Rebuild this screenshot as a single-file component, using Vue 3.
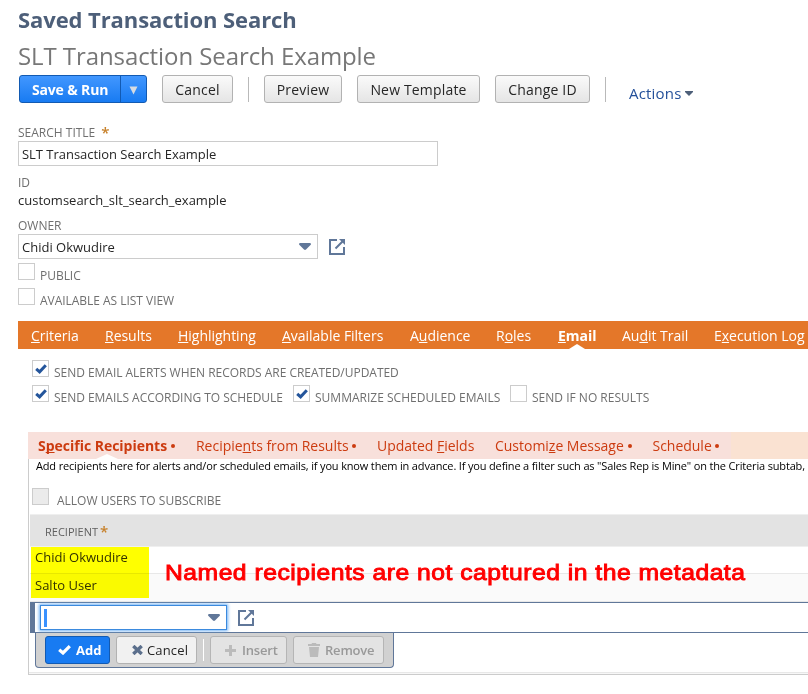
<script setup>
const toolbar = [
  { label: 'Cancel', cls: 'b-cancel' },
  { sep: true },
  { label: 'Preview', cls: 'b-preview' },
  { label: 'New Template', cls: 'b-template' },
  { label: 'Change ID', cls: 'b-change' },
  { sep: true },
]

// Each tab label is split around its underlined access key.
const tabs = [
  { a: '', k: 'C', b: 'riteria', w: 48 },
  { a: '', k: 'R', b: 'esults', w: 47 },
  { a: '', k: 'H', b: 'ighlighting', w: 78 },
  { a: '', k: 'A', b: 'vailable Filters', w: 102 },
  { a: 'A', k: 'u', b: 'dience', w: 60 },
  { a: 'R', k: 'o', b: 'les', w: 36 },
  { a: '', k: 'E', b: 'mail', w: 38, active: true },
  { a: 'Au', k: 'd', b: 'it Trail', w: 66 },
  { a: 'E', k: 'x', b: 'ecution Log', w: 91 },
]

const subtabs = [
  { a: 'S', k: 'p', b: 'ecific Recipients', w: 137, dot: true, active: true },
  { a: 'Recipie', k: 'n', b: 'ts from Results', w: 160, dot: true },
  { a: 'Updated ', k: 'F', b: 'ields', w: 97 },
  { a: 'Customi', k: 'z', b: 'e Message', w: 136.5, dot: true },
  { a: 'Schedule', k: '', b: '', w: 66.5, dot: true },
]

const schedule = [
  { label: 'SEND EMAILS ACCORDING TO SCHEDULE', on: true, w: 239 },
  { label: 'SUMMARIZE SCHEDULED EMAILS', on: true, w: 195 },
  { label: 'SEND IF NO RESULTS', on: false, w: 130 },
]

const recipients = ['Chidi Okwudire', 'Salto User']
</script>

<template>
  <main class="page">
    <h1>Saved Transaction Search</h1>
    <h2>SLT Transaction Search Example</h2>

    <div class="toolbar">
      <div class="split">
        <button class="run">Save &amp; Run</button>
        <button class="more">
          <svg width="9" height="9" viewBox="0 0 9 9"><path d="M0.5 0.5H8.5L4.5 8.5Z" fill="#d6dbe2" /></svg>
        </button>
      </div>
      <template v-for="(t, i) in toolbar" :key="i">
        <i v-if="t.sep" class="sep"></i>
        <button v-else class="btn" :class="t.cls">{{ t.label }}</button>
      </template>
      <a class="actions">Actions<svg width="8" height="5" viewBox="0 0 8 5"><path d="M0 0H8V1L4 5L0 1Z" fill="#4d5f79" /></svg></a>
    </div>

    <section class="fields">
      <label class="lab first"><span class="t-title">SEARCH TITLE</span><b class="star">*</b></label>
      <div class="input title-input">SLT Transaction Search Example</div>
      <label class="lab id">ID</label>
      <div class="value">customsearch_slt_search_example</div>
      <label class="lab owner">OWNER</label>
      <div class="line">
        <div class="input select">
          <span>Chidi Okwudire</span>
          <svg width="12" height="7" viewBox="0 0 12 7"><path d="M0.5 0H11.5L12 1.6L7 6.6Q6 7.4 5 6.6L0 1.6Z" fill="#607799" /></svg>
        </div>
        <svg class="pop" width="16" height="16" viewBox="0 0 16 16" fill="none" stroke="#607799" stroke-width="2"><path d="M8 1H1V15H15V8M6.5 9.5L13.5 2.5" /><path d="M10 0H16V6Z" fill="#607799" stroke="none" /></svg>
      </div>
      <div class="check c1"><i class="box"></i><span>PUBLIC</span></div>
      <div class="check c2"><i class="box"></i><span class="t-list">AVAILABLE AS LIST VIEW</span></div>
    </section>

    <nav class="tabs">
      <a v-for="t in tabs" :key="t.b" :class="{ active: t.active }" :style="{ width: t.w + 'px' }">{{ t.a }}<u>{{ t.k }}</u>{{ t.b }}</a>
    </nav>

    <section class="mail">
      <div class="check">
        <i class="box"><svg width="12" height="10" viewBox="0 0 12 10" fill="none" stroke="#24559b" stroke-width="3"><path d="M1.2 4.8L4.6 7.8L10.8 1.2" /></svg></i>
        <span class="t-alerts">SEND EMAIL ALERTS WHEN RECORDS ARE CREATED/UPDATED</span>
      </div>
      <div class="row2">
        <div v-for="s in schedule" :key="s.label" class="check" :style="{ width: s.w + 22 + 'px' }">
          <i class="box"><svg v-if="s.on" width="12" height="10" viewBox="0 0 12 10" fill="none" stroke="#24559b" stroke-width="3"><path d="M1.2 4.8L4.6 7.8L10.8 1.2" /></svg></i>
          <span>{{ s.label }}</span>
        </div>
      </div>
    </section>

    <nav class="subtabs">
      <div class="inner">
        <a v-for="t in subtabs" :key="t.a" :class="{ active: t.active }" :style="{ width: t.w + 'px' }"><span>{{ t.a }}<u>{{ t.k }}</u>{{ t.b }}</span><i v-if="t.dot" class="dot"></i></a>
      </div>
    </nav>

    <section class="panel">
      <p class="help">Add recipients here for alerts and/or scheduled emails, if you know them in advance. If you define a filter such as "Sales Rep is Mine" on the Criteria subtab,</p>
      <div class="check allow"><i class="box off"></i><span>ALLOW USERS TO SUBSCRIBE</span></div>
      <div class="thead"><span>RECIPIENT</span><b class="star">*</b></div>
      <div class="rows">
        <div v-for="r in recipients" :key="r" class="rec">{{ r }}</div>
        <div class="marker"></div>
        <div class="note">Named recipients are not captured in the metadata</div>
      </div>
      <div class="edit">
        <div class="focus">
          <i class="cursor"></i>
          <svg width="12" height="7" viewBox="0 0 12 7"><path d="M0.5 0H11.5L12 1.6L7 6.6Q6 7.4 5 6.6L0 1.6Z" fill="#607799" /></svg>
        </div>
        <svg class="pop2" width="16" height="16" viewBox="0 0 16 16" fill="none" stroke="#607799" stroke-width="2"><path d="M8 1H1V15H15V8M6.5 9.5L13.5 2.5" /><path d="M10 0H16V6Z" fill="#607799" stroke="none" /></svg>
      </div>
      <div class="machine">
        <button class="btn add"><svg width="13" height="10" viewBox="0 0 13 10" fill="none" stroke="#fff" stroke-width="3.2"><path d="M1.2 4.8L5 8L11.8 1.2" /></svg><span>Add</span></button>
        <button class="btn mcancel"><svg width="11" height="10" viewBox="0 0 11 10" fill="none" stroke="#5b6f8c" stroke-width="3.4"><path d="M1.3 1L9.7 9M9.7 1L1.3 9" /></svg><span>Cancel</span></button>
        <i class="wsep"></i>
        <button class="btn ins"><svg width="11" height="11" viewBox="0 0 11 11" fill="none" stroke="#bbb" stroke-width="3"><path d="M5.5 0V11M0 5.5H11" /></svg><span>Insert</span></button>
        <button class="btn rem"><svg width="12" height="14" viewBox="0 0 12 14" fill="#bbb"><path d="M0 1H3.5L4 0H8L8.5 1H12V3H0ZM1 4H11L10 14H2Z" /></svg><span>Remove</span></button>
      </div>
      <div class="foot"></div>
    </section>
  </main>
</template>

<style>
body { background: #fff; overflow: hidden; }
</style>

<style scoped>
* { box-sizing: border-box; }
.page {
  width: 808px;
  height: 694px;
  overflow: hidden;
  font-family: "Open Sans", "Noto Sans", sans-serif;
  color: #262626;
  white-space: nowrap;
  display: flex;
  flex-direction: column;
}
h1, h2, p { margin: 0; }
h1 { padding-left: 18px; font-size: 22px; line-height: 38px; height: 38px; font-weight: 700; color: #4d5f79; letter-spacing: -0.09px; }
h2 { padding-left: 18px; font-size: 24px; line-height: 36px; height: 34px; font-weight: 400; color: #777; letter-spacing: -0.08px; }
button { font-family: inherit; padding: 0; margin: 0; }
svg { display: block; flex: none; }
i, b { font-style: normal; flex: none; }

.toolbar { display: flex; align-items: flex-start; margin: 3px 0 0 19px; height: 28px; }
.split { display: flex; width: 128px; height: 28px; border: 1px solid #125ab2; border-radius: 3px; background: linear-gradient(#4297ff, #187bf2); margin-right: 15px; }
.split button { border: 0; background: none; height: 26px; }
.run { width: 101px; font-size: 14px; font-weight: 700; color: #fff; line-height: 28px; letter-spacing: -0.15px; }
.split .more { width: 26px; border-left: 1px solid #125ab2; display: flex; align-items: center; justify-content: center; padding-top: 2px; }
.btn { height: 28px; border: 1px solid #b2b2b2; border-radius: 3px; background: linear-gradient(#fafafa, #e5e5e5); font-size: 14px; font-weight: 500; color: #262626; line-height: 28px; letter-spacing: 0.17px; }
.b-cancel { width: 71px; margin-right: 15px; }
.sep { width: 1px; height: 25px; margin: 2px 15px 0 0; background: #b9b9b9; }
.b-preview { width: 78px; margin-right: 15px; }
.b-template { width: 123px; margin-right: 15px; }
.b-change { width: 95px; margin-right: 15px; }
.actions { display: flex; align-items: center; gap: 3px; margin-left: 8px; margin-top: 8px; height: 20px; line-height: 20px; font-size: 15px; font-weight: 500; letter-spacing: 0.2px; color: #24509a; }

.fields { margin-left: 18px; display: flex; flex-direction: column; }
.lab { display: flex; height: 16px; line-height: 18px; font-size: 12px; color: #6f6f6f; }
.first { margin-top: 21px; }
.star { color: #c7812b; font-size: 15px; line-height: 17px; font-weight: 600; margin-left: 6px; }
.input { height: 25px; border: 1px solid #ccc; background: #fff; line-height: 24px; font-size: 13px; padding-left: 3px; margin-top: 1px; }
.title-input { width: 420px; letter-spacing: -0.03px; }
.id { margin-top: 8px; }
.value { font-size: 13px; line-height: 20px; height: 20px; }
.owner { margin-top: 7px; }
.line { display: flex; }
.select { width: 300px; display: flex; justify-content: space-between; padding-right: 6px; }
.select svg { margin-top: 8px; }
.pop { margin: 6px 0 0 11px; }
.check { display: flex; height: 17px; font-size: 12px; color: #6f6f6f; }
.check span { margin-left: 5px; line-height: 16px; padding-top: 5px; height: 21px; letter-spacing: -0.03px; }
.row2 .check + .check span { letter-spacing: 0.01px; }
.box { width: 17px; height: 17px; border: 1px solid #ccc; background: #fff; display: flex; align-items: center; justify-content: center; }
.off { background: #ebebeb; }
.c1 { margin-top: 4px; }
.c2 { margin-top: 8px; }

.tabs { display: flex; gap: 26px; margin: 16px 0 0 18px; padding-left: 13px; height: 28px; background: #e47729; color: #fff; font-size: 14px; line-height: 29px; overflow: hidden; }
.tabs a { flex: none; position: relative; letter-spacing: -0.02px; }
u { text-underline-offset: 1px; text-decoration-thickness: 1px; text-decoration-skip-ink: none; }
.active { font-weight: 700; }
.tabs .active::after { content: ""; position: absolute; left: 11px; bottom: 0; border: 8px solid transparent; border-top: 0; border-bottom: 5px solid #fff; }

.mail { margin: 11px 0 0 32px; display: flex; flex-direction: column; gap: 8px; }
.row2 { display: flex; }

.subtabs { margin: 30px 0 0 28px; height: 27px; background: #fae2d2; }
.inner { width: 703px; height: 27px; background: #f8e0db; display: flex; gap: 21px; padding-left: 10px; font-size: 14px; line-height: 27px; color: #cc3b10; letter-spacing: -0.02px; }
.subtabs a { flex: none; display: flex; position: relative; justify-content: space-between; align-items: center; }
.subtabs .active::after { content: ""; position: absolute; left: 58px; bottom: 0; border: 11px solid transparent; border-top: 0; border-bottom: 5px solid #fff; }
.dot { width: 4px; height: 4px; border-radius: 50%; background: #cc3b10; margin-top: 1px; }

.panel { margin-left: 28px; border-left: 1px solid #ccc; height: 216px; display: flex; flex-direction: column; }
.help { font-size: 11px; line-height: 14px; height: 15px; padding-left: 7px; color: #000; letter-spacing: -0.16px; }
.allow { margin: 14px 0 0 3px; }
.allow span { margin-left: 8px; letter-spacing: 0; }
.thead { margin: 9px 0 0 1px; height: 33px; border-top: 1px solid #efefef; border-bottom: 1px solid #efefef; background: #e3e3e3; padding-left: 15px; display: flex; font-size: 11px; line-height: 34px; color: #5f5f5f; }
.thead .star { margin-left: 2px; line-height: 32px; }
.rows { position: relative; margin-left: 1px; height: 55px; }
.rec { height: 27px; border-bottom: 1px solid #e8e8e8; font-size: 13px; line-height: 21px; padding-left: 5px; color: #333; }
.rec + .rec { height: 28px; background: #fafafa; line-height: 23px; }
.marker { position: absolute; left: 1px; top: 0; width: 118px; height: 51px; background: #ff0; mix-blend-mode: multiply; }
.note { position: absolute; left: 135px; top: 9px; font: 400 22px/33px "Liberation Sans", Arial, sans-serif; letter-spacing: 0.45px; -webkit-text-stroke: 0.9px #f00; transform: scaleX(1.122); transform-origin: 0 0; color: #f00; }
.edit { margin-left: 1px; height: 31px; border: 1px solid #607799; border-left-width: 5px; border-right: 0; display: flex; padding: 2px 0 0 5px; }
.focus { width: 187px; height: 25px; border: 1px solid #3b8ade; box-shadow: 0 0 3px 1px #6eb0f5; display: flex; justify-content: space-between; padding: 3px 6px 0 3px; }
.cursor { width: 3px; height: 18px; background: #3a92ff; }
.focus svg { margin-top: 5px; }
.pop2 { margin: 5px 0 0 11px; }
.machine { margin-left: 6px; width: 359px; height: 35px; background: #d1d1d1; border: 1px solid #607799; border-top: 0; border-radius: 0 0 4px 4px; display: flex; padding: 3px 0 0 9px; }
.machine .btn { display: flex; align-items: center; background: #f1f1f1; font-size: 13px; letter-spacing: 0; }
.machine .add { width: 65px; background: #187bf2; border-color: #125ab2; color: #fff; font-weight: 700; padding-left: 12px; gap: 5px; margin-right: 6px; }
.machine .mcancel { width: 81px; padding-left: 15px; gap: 4px; margin-right: 6px; letter-spacing: 0.15px; }
.wsep { width: 1px; height: 22px; margin: 3px 6px 0 0; background: #fff; }
.machine .ins, .machine .rem { background: #e3e3e3; color: #999; border-color: #b5b5b5; font-weight: 600; letter-spacing: -0.2px; }
.machine .ins { width: 77px; padding-left: 14px; gap: 6px; margin-right: 6px; }
.machine .rem { width: 91px; padding-left: 14px; gap: 5px; }
.foot { margin-top: 4px; height: 3px; border-top: 1px solid #e8e8e8; border-bottom: 1px solid #ccc; background: #f7f7f7; }
</style>
